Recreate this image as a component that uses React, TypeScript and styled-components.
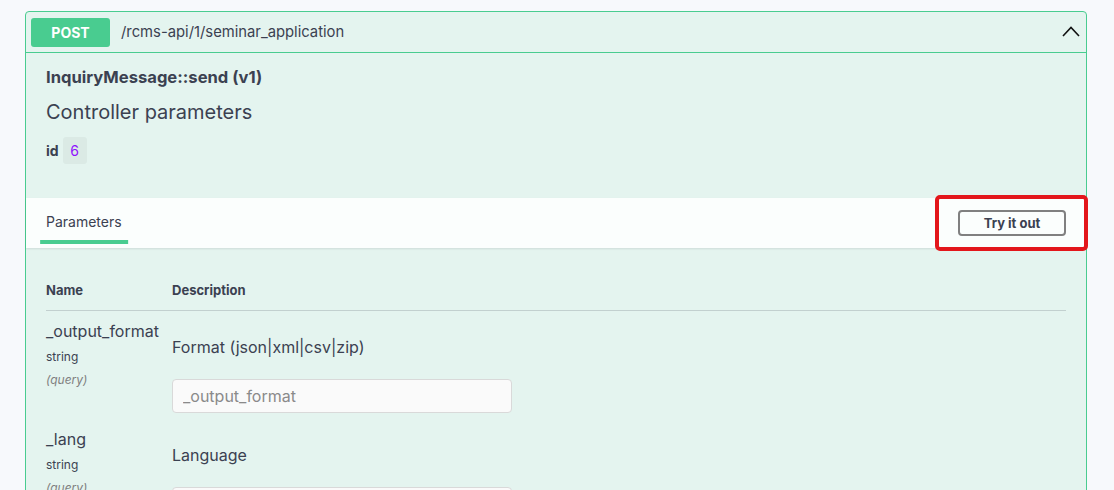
import * as React from 'react';
import styled, { createGlobalStyle } from 'styled-components';

const FONT = `Inter, "Noto Sans CJK JP", sans-serif`;
const INK = '#3b4151';
const GREEN = '#49cc90';

type Param = {
  name: string;
  type: string;
  location: string;
  description: string;
};

const params: Param[] = [
  {
    name: '_output_format',
    type: 'string',
    location: 'query',
    description: 'Format (json|xml|csv|zip)',
  },
  { name: '_lang', type: 'string', location: 'query', description: 'Language' },
];

const GlobalStyle = createGlobalStyle`
  html, body {
    margin: 0;
    background: #f7f9fc;
    font-family: ${FONT};
    color: ${INK};
  }
  * { box-sizing: border-box; }
`;

const ChevronUp = () => (
  <svg width="18" height="11" viewBox="0 0 18 11" fill="none">
    <path d="M1 10L9 1.5L17 10" stroke="#111" strokeWidth="1.6" />
  </svg>
);

export default function App() {
  return (
    <>
      <GlobalStyle />
      <Page>
        <Opblock>
          <Summary>
            <MethodBadge>POST</MethodBadge>
            <SummaryPath>/rcms-api/1/seminar_application</SummaryPath>
            <ToggleButton aria-label="collapse">
              <ChevronUp />
            </ToggleButton>
          </Summary>

          <Description>
            <OperationTitle>InquiryMessage::send (v1)</OperationTitle>
            <SectionTitle>Controller parameters</SectionTitle>
            <ControllerParam>
              <ParamKey>id</ParamKey>
              <CodeValue>6</CodeValue>
            </ControllerParam>
          </Description>

          <TabHeader>
            <TabItem>
              <TabLabel $active>Parameters</TabLabel>
            </TabItem>
            <TryOutWrap>
              <TryOutButton>Try it out</TryOutButton>
              <Highlight />
            </TryOutWrap>
          </TabHeader>

          <ParamsSection>
            <HeaderRow>
              <HeaderCell>Name</HeaderCell>
              <HeaderCell>Description</HeaderCell>
            </HeaderRow>
            {params.map((p) => (
              <ParamRow key={p.name}>
                <NameCell>
                  <ParamName>{p.name}</ParamName>
                  <ParamType>{p.type}</ParamType>
                  <ParamIn>({p.location})</ParamIn>
                </NameCell>
                <DescCell>
                  <DescText>{p.description}</DescText>
                  <ParamInput placeholder={p.name} />
                </DescCell>
              </ParamRow>
            ))}
          </ParamsSection>
        </Opblock>
      </Page>
    </>
  );
}

const Page = styled.div`
  padding: 11px 27px 0 25px;
  height: 490px;
  overflow: hidden;
`;

const Opblock = styled.div`
  border: 1px solid ${GREEN};
  border-radius: 4px;
  background: #e4f4ef;
`;

const Summary = styled.div`
  display: flex;
  align-items: center;
  height: 41px;
  padding: 0 6px 0 5px;
  border-bottom: 1px solid ${GREEN};
`;

const MethodBadge = styled.span`
  display: inline-flex;
  align-items: center;
  justify-content: center;
  width: 79px;
  height: 29px;
  border-radius: 3px;
  background: ${GREEN};
  color: #fff;
  font-size: 14px;
  font-weight: 700;
`;

const SummaryPath = styled.span`
  flex: 1;
  padding-left: 11px;
  font-size: 14.8px;
  color: ${INK};
`;

const ToggleButton = styled.button`
  display: flex;
  align-items: center;
  border: none;
  background: none;
  padding: 0;
  margin-top: -1px;
  cursor: pointer;
`;

const Description = styled.div`
  padding: 14px 20px 34px;
`;

const OperationTitle = styled.div`
  font-size: 16.6px;
  line-height: 20px;
  font-weight: 700;
`;

const SectionTitle = styled.div`
  margin-top: 13px;
  font-size: 20px;
  line-height: 24px;
`;

const ControllerParam = styled.div`
  display: flex;
  align-items: center;
  gap: 4px;
  margin-top: 13px;
`;

const ParamKey = styled.span`
  font-size: 14px;
  font-weight: 700;
`;

const CodeValue = styled.code`
  display: inline-flex;
  align-items: center;
  justify-content: center;
  width: 24px;
  height: 27px;
  border-radius: 3px;
  background: rgba(0, 0, 0, 0.04);
  color: #9012fe;
  font-family: ${FONT};
  font-size: 14px;
`;

const TabHeader = styled.div`
  display: flex;
  align-items: center;
  justify-content: space-between;
  height: 50px;
  padding: 0 20px;
  background: rgba(255, 255, 255, 0.85);
  box-shadow: 0 1px 2px rgba(0, 0, 0, 0.1);
`;

const TabItem = styled.div`
  display: flex;
  align-items: center;
  height: 100%;
`;

const TabLabel = styled.span<{ $active?: boolean }>`
  position: relative;
  font-size: 14px;
  line-height: 18px;
  margin-top: -3px;

  &::after {
    content: '';
    display: ${({ $active }) => ($active ? 'block' : 'none')};
    position: absolute;
    left: 50%;
    bottom: -13px;
    width: 116%;
    height: 4px;
    transform: translateX(-50%);
    background: ${GREEN};
  }
`;

const TryOutWrap = styled.div`
  position: relative;
  display: flex;
`;

const TryOutButton = styled.button`
  width: 108px;
  height: 26px;
  border: 2px solid #808080;
  border-radius: 4px;
  background: transparent;
  color: ${INK};
  font-family: ${FONT};
  font-size: 13px;
  font-weight: 700;
  cursor: pointer;
`;

const Highlight = styled.div`
  position: absolute;
  top: -15px;
  bottom: -15px;
  left: -23px;
  right: -22px;
  border: 4px solid #e3161b;
  border-radius: 5px;
  pointer-events: none;
`;

const ParamsSection = styled.div`
  padding: 33px 20px 0;
`;

const HeaderRow = styled.div`
  display: grid;
  grid-template-columns: 126px 1fr;
  padding-bottom: 11px;
  border-bottom: 1px solid rgba(59, 65, 81, 0.2);
`;

const HeaderCell = styled.div`
  font-size: 13px;
  line-height: 18px;
  font-weight: 700;
`;

const ParamRow = styled.div`
  display: grid;
  grid-template-columns: 126px 1fr;
  padding: 10px 0 6px;
`;

const NameCell = styled.div`
  display: flex;
  flex-direction: column;
`;

const ParamName = styled.div`
  font-size: 16px;
  line-height: 20px;
`;

const ParamType = styled.div`
  margin-top: 7px;
  font-size: 12px;
  line-height: 18px;
`;

const ParamIn = styled.div`
  margin-top: 5px;
  font-size: 12px;
  line-height: 18px;
  font-style: italic;
  color: #808080;
`;

const DescCell = styled.div`
  display: flex;
  flex-direction: column;
  align-items: flex-start;
`;

const DescText = styled.p`
  margin: 15px 0 21px;
  font-size: 16px;
  line-height: 22px;
`;

const ParamInput = styled.input`
  width: 340px;
  height: 34px;
  padding: 0 10px;
  border: 1px solid #d9d9d9;
  border-radius: 4px;
  background: #fafafa;
  font-family: ${FONT};
  font-size: 16px;
  color: ${INK};

  &::placeholder {
    color: #8a8a8a;
  }
`;
